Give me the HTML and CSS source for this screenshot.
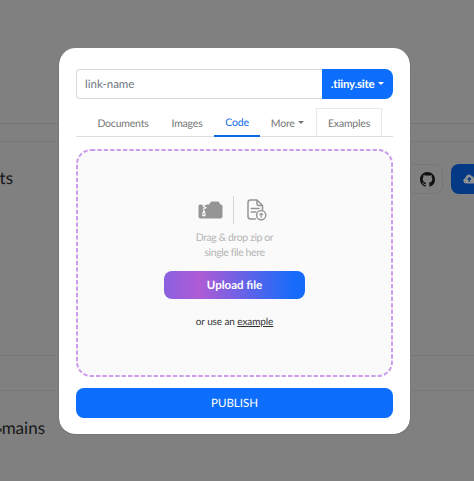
FILE: index.html
```html
<!DOCTYPE html>
<html lang="en">
<head>
    <meta charset="UTF-8">
    <meta name="viewport" content="width=device-width, initial-scale=1.0">
    <title>Tiiny Host</title>
    <link rel="stylesheet" href="styles.css">
</head>
<body>
    <!-- Dashboard behind the modal -->
    <div class="page">
        <div class="page-header"></div>
        <div class="section projects">
            <h2 class="projects-title">ts</h2>
            <div class="actions">
                <div class="btn-github">
                    <svg width="15" height="15" viewBox="0 0 16 16" fill="#111"><path d="M8 0C3.58 0 0 3.58 0 8c0 3.54 2.29 6.53 5.47 7.59.4.07.55-.17.55-.38 0-.19-.01-.82-.01-1.49-2.01.37-2.53-.49-2.69-.94-.09-.23-.48-.94-.82-1.13-.28-.15-.68-.52-.01-.53.63-.01 1.08.58 1.23.82.72 1.21 1.87.87 2.33.66.07-.52.28-.87.51-1.07-1.78-.2-3.64-.89-3.64-3.95 0-.87.31-1.59.82-2.15-.08-.2-.36-1.02.08-2.12 0 0 .67-.21 2.2.82.64-.18 1.32-.27 2-.27s1.36.09 2 .27c1.53-1.04 2.2-.82 2.2-.82.44 1.1.16 1.92.08 2.12.51.56.82 1.27.82 2.15 0 3.07-1.87 3.75-3.65 3.95.29.25.54.73.54 1.48 0 1.07-.01 1.93-.01 2.2 0 .21.15.46.55.38A8.01 8.01 0 0 0 16 8c0-4.42-3.58-8-8-8z"/></svg>
                </div>
                <div class="btn-upload">
                    <svg width="13" height="10" viewBox="0 0 13 10"><path d="M3 9.5a2.8 2.8 0 0 1-.6-5.500A3.500 3.500 0 0 1 8.800 2.200a2.200 2.200 0 0 1 2 2.300A2.600 2.600 0 0 1 10.300 9.500z" fill="#929292"/><path d="M6.300 8V4M4.600 5.500l1.700-1.700L8 5.500" fill="none" stroke="#053986" stroke-width="1.200"/></svg>
                </div>
            </div>
        </div>
        <div class="section domains">
            <h2 class="domains-title">mains</h2>
        </div>
    </div>

    <!-- Upload modal -->
    <div class="modal">
        <div class="link-group">
            <input class="link-input" type="text" placeholder="link-name">
            <button class="link-domain">.tiiny.site <span class="caret"></span></button>
        </div>

        <div class="tabs">
            <div class="tab documents">Documents</div>
            <div class="tab images">Images</div>
            <div class="tab code">Code</div>
            <div class="tab more">More <span class="caret"></span></div>
            <div class="tab examples">Examples</div>
        </div>

        <div class="dropzone">
            <svg class="dropzone-border" width="317" height="228"><rect x="1" y="1" width="315" height="226" rx="14"/></svg>
            <div class="icons">
                <!-- zipped folder -->
                <svg width="25" height="18" viewBox="0 0 25 18">
                    <path d="M2 3.500H11L13 .8Q13.300.5 14 .5H20Q20.800.5 21.200 1.200L22.300 3.500H23Q24.500 3.500 24.500 5V15.500Q24.500 17.500 22.500 17.500H2.500Q.5 17.500.5 15.500V5Q.5 3.500 2 3.500z" fill="#959595"/>
                    <path d="M3 3.200h4.500L5.300 5.200 7.800 6.700 4.800 8.500" fill="none" stroke="#fafafa" stroke-width="1.300"/>
                    <path d="M5 9.500h1.800l.9 4.300q.2 1.700-1.800 1.700t-1.800-1.700z" fill="#fafafa"/>
                    <path d="M5.900 12v2" stroke="#959595"/>
                </svg>
                <span class="divider"></span>
                <!-- file upload -->
                <svg width="20" height="22" viewBox="0 0 20 22" fill="none" stroke="#959595" stroke-width="1.500" stroke-linecap="round" stroke-linejoin="round">
                    <path d="M8.500 20H3.500Q1 20 1 17.500V3.500Q1 1 3.500 1H10L15.500 6.500V10.500M10 1V5Q10 6.500 11.500 6.500H15.500M4.300 9.500H12M4.300 13H9"/>
                    <circle cx="14.200" cy="16.200" r="4.600"/>
                    <path d="M14.200 18.200V14.500M12.800 15.700l1.400-1.400 1.400 1.400" stroke-width="1.200"/>
                </svg>
            </div>
            <p class="hint">Drag &amp; drop zip or<br>single file here</p>
            <button class="btn-file">Upload file</button>
            <p class="example">or use an <a>example</a></p>
        </div>

        <button class="btn-publish">PUBLISH</button>
    </div>
</body>
</html>
```
FILE: styles.css
```css
* {
    box-sizing: border-box;
}
body {
    margin: 0;
    height: 481px;
    overflow: hidden;
    background-color: #808080;
    font-family: Lato, sans-serif;
    text-rendering: geometricPrecision;
}
button {
    border: none;
    padding: 0;
    font-family: inherit;
    text-rendering: inherit;
    color: #fff;
    background-color: #0d6efd;
}
h2, p {
    margin: 0;
}
.page {
    height: 481px;
    color: #151719;
}
.page-header {
    height: 124px;
    border-bottom: 1px solid #757575;
}
.section {
    margin-top: 17px;
    border-top: 1px solid #777;
    display: flex;
    justify-content: space-between;
}
.projects {
    height: 215px;
    padding-top: 22px;
    border-bottom: 1px solid #767676;
}
.domains {
    margin-top: 34px;
    padding-top: 25px;
}
.section h2 {
    display: flex;
    justify-content: flex-end;
    height: 24px;
    line-height: 24px;
    font-size: 17px;
    font-weight: 400;
}
.projects .projects-title {
    width: 13px;
    margin-top: 2px;
}
.domains-title {
    width: 45px;
    align-items: center;
    justify-content: space-between;
}
.domains-title::before {
    content: "";
    width: 2px;
    height: 4px;
    margin-top: 4px;
    border-radius: 0 2px 2px 0;
    background-color: #33383c;
}
.actions {
    display: flex;
    gap: 8px;
    margin-right: -20px;
}
.btn-github {
    display: flex;
    align-items: center;
    justify-content: flex-end;
    width: 50px;
    height: 30px;
    padding-right: 7px;
    border: 1px solid #777;
    border-radius: 8px;
}
.btn-upload {
    display: flex;
    align-items: center;
    width: 43px;
    height: 30px;
    padding-left: 12px;
    border-radius: 8px;
    background-color: #053986;
}
.modal {
    position: absolute;
    top: 48px;
    left: 58px;
    width: 353px;
    height: 387px;
    padding: 21px 17px 17px;
    border: 1px solid #777;
    border-top: none;
    border-radius: 17px;
    background-color: #fff;
    background-clip: padding-box;
}
.link-group {
    display: flex;
    height: 30px;
}
.link-input {
    flex: 1;
    min-width: 0;
    padding: 0 8px;
    border: 1px solid #d5d9dd;
    border-right: none;
    border-radius: 4px 0 0 4px;
    font-family: inherit;
    font-size: 11.500px;
    text-rendering: inherit;
}
.link-input::placeholder {
    color: #6c757d;
}
.link-domain {
    width: 71px;
    border-radius: 0 8px 8px 0;
    font-size: 11.500px;
    font-weight: 700;
    letter-spacing: -0.2px;
}
.caret {
    display: inline-block;
    margin-left: 1px;
    vertical-align: 3px;
    border-top: 3px solid;
    border-left: 3px solid transparent;
    border-right: 3px solid transparent;
}
.tabs {
    display: flex;
    height: 29px;
    margin-top: 9px;
    border-bottom: 1px solid #dedede;
    font-size: 10.500px;
    letter-spacing: -0.2px;
    line-height: 32px;
    color: #777;
    text-align: center;
}
.documents {
    width: 60px;
    margin-left: 17px;
}
.images {
    width: 46px;
    margin-left: 11px;
    margin-right: 4px;
}
.tab.code {
    width: 46px;
    height: 29px;
    line-height: 30px;
    border-bottom: 2px solid #0b69e3;
    color: #0b69e3;
}
.more {
    width: 55px;
}
.examples {
    width: 66px;
    height: 28px;
    margin-left: 1px;
    line-height: 30px;
    border: 1px solid #e9e9e9;
    border-bottom: none;
}
.dropzone {
    position: relative;
    display: flex;
    flex-direction: column;
    align-items: center;
    height: 228px;
    margin-top: 12px;
    padding-top: 47px;
    border-radius: 15px;
    background-color: #fafafa;
}
.dropzone-border {
    position: absolute;
    top: 0;
    left: 0;
}
.dropzone-border rect {
    fill: none;
    stroke: #ce9cec;
    stroke-width: 2;
    stroke-dasharray: 4.300 2.100;
}
.icons {
    display: flex;
    align-items: center;
    gap: 13px;
    height: 28px;
    margin-right: 4px;
}
.icons svg:first-child {
    margin-right: -3px;
}
.divider {
    width: 1px;
    height: 28px;
    background-color: #d5d5d5;
}
.hint {
    margin-top: 7px;
    font-size: 10.500px;
    letter-spacing: -0.4px;
    line-height: 15px;
    text-align: center;
    color: #b5b5b5;
}
.btn-file {
    width: 141px;
    height: 28px;
    margin-top: 10px;
    border-radius: 8px;
    background: linear-gradient(90deg, #8a60e0 0%, #af5bd5 25%, #166bfa 92%);
    font-size: 11.500px;
    font-weight: 700;
}
.example {
    margin-top: 15px;
    font-size: 10px;
    letter-spacing: -0.1px;
    line-height: 16px;
    color: #333;
}
.example a {
    text-decoration: underline;
}
.btn-publish {
    display: block;
    width: 100%;
    height: 30px;
    margin-top: 11px;
    border-radius: 8px;
    font-size: 11.500px;
}
```
